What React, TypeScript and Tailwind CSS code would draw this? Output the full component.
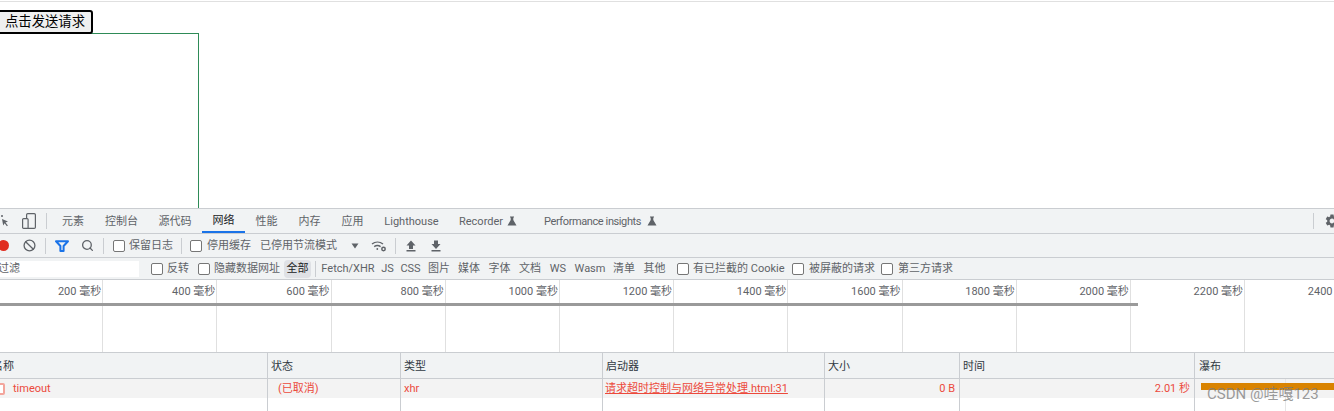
import React from 'react';
import { Ban, Search } from 'lucide-react';

const tabs = [
  { label: '元素', cls: 'w-[44px]' },
  { label: '控制台', cls: 'w-[53px]' },
  { label: '源代码', cls: 'w-[54px]' },
  { label: '网络', cls: 'w-[43px] border-b-2 border-[#1a73e8] text-[#202124]' },
  { label: '性能', cls: 'w-[43px]' },
  { label: '内存', cls: 'w-[43px]' },
  { label: '应用', cls: 'w-[43px]' },
  { label: 'Lighthouse', cls: 'w-[75px]' },
];

const chips = [
  { label: 'Fetch/XHR', cls: 'w-[60px]' },
  { label: 'JS', cls: 'w-[19px]' },
  { label: 'CSS', cls: 'w-[27px]' },
  { label: '图片', cls: 'w-[30px]' },
  { label: '媒体', cls: 'w-[30px]' },
  { label: '字体', cls: 'w-[31px]' },
  { label: '文档', cls: 'w-[30px]' },
  { label: 'WS', cls: 'w-[26px]' },
  { label: 'Wasm', cls: 'w-[38px]' },
  { label: '清单', cls: 'w-[30px]' },
  { label: '其他', cls: 'w-[31px]' },
];

const ticks = ['200', '400', '600', '800', '1000', '1200', '1400', '1600', '1800', '2000', '2200', '2400'];

const Check = ({ cls = '' }: { cls?: string }) => (
  <span className={`block h-[12px] w-[12px] shrink-0 rounded-[2px] border border-[#767676] bg-white ${cls}`} />
);

const Sep = ({ cls = '' }: { cls?: string }) => <span className={`block h-[16px] w-px shrink-0 bg-[#cacdd1] ${cls}`} />;

const Flask = ({ cls = '' }: { cls?: string }) => (
  <svg viewBox="0 0 10 10" className={`h-[10px] w-[10px] shrink-0 ${cls}`} fill="#5f6368">
    <path d="M3 0.5h4v1h-0.7v2.6L9.5 9.5H0.5L3.7 4.1V1.5H3z" />
  </svg>
);

const Row = ({ cells, cls }: { cells: React.ReactNode[]; cls: string }) => {
  const widths = ['w-[280px]', 'w-[133px]', 'w-[202px]', 'w-[222px]', 'w-[135px]', 'w-[235px]', 'w-[160px]'];
  return (
    <div className={`flex -ml-[12px] ${cls}`}>
      {cells.map((c, i) => (
        <div key={i} className={`flex h-full shrink-0 items-center border-r border-[#cacdd1] ${widths[i]}`}>
          {c}
        </div>
      ))}
    </div>
  );
};

export default function App() {
  return (
    <div className="relative h-[411px] w-[1334px] overflow-hidden bg-white font-['Roboto','Noto_Sans_CJK_SC',sans-serif] text-[11px] leading-[16px]">
      {/* page */}
      <div className="h-[208px] overflow-hidden pt-px">
        <div className="h-px bg-[#e0e0e0]" />
        <button className="relative z-10 -ml-[3px] mt-[8px] block h-[24px] rounded-[3px] border-2 border-black bg-[#efefef] px-[6px] text-[13.33px] leading-[18px] text-black">
          点击发送请求
        </button>
        <div className="-ml-[10px] -mt-px h-[300px] w-[209px] border border-[#2e8b57]" />
      </div>

      {/* devtools */}
      <div className="border-t border-[#cacdd1] bg-[#f1f3f4] text-[#5f6368]">
        <div className="flex h-[25px] items-center border-b border-[#cacdd1]">
          <svg viewBox="0 0 16 16" className="-ml-[6px] h-[16px] w-[16px] shrink-0" fill="none" stroke="#5f6368" strokeWidth="1.3">
            <path d="M9 3H3v8h3" strokeDasharray="2 1" />
            <path d="M8 6l6 2.4-2.5 1 2.4 3-1 .8-2.3-3-1.4 2.2z" fill="#5f6368" stroke="none" />
          </svg>
          <svg viewBox="0 0 14 16" className="ml-[12px] h-[16px] w-[14px] shrink-0" fill="none" stroke="#5f6368" strokeWidth="1.2">
            <rect x="4.6" y="0.6" width="8.8" height="14.8" rx="1.2" />
            <rect x="0.6" y="5.6" width="5.5" height="9.8" rx="1" fill="#f1f3f4" />
          </svg>
          <Sep cls="ml-[10px]" />
          <div className="ml-[4px] flex h-full">
            {tabs.map(t => (
              <div key={t.label} className={`flex h-full items-center justify-center pt-[2px] ${t.cls}`}>
                {t.label}
              </div>
            ))}
          </div>
          <span className="ml-[10px] pt-[2px]">Recorder</span>
          <Flask cls="ml-[4px]" />
          <span className="ml-[27px] pt-[2px] tracking-[-0.4px] whitespace-nowrap">Performance insights</span>
          <Flask cls="ml-[6px]" />
          <Sep cls="ml-auto" />
          <svg viewBox="0 0 24 24" className="ml-[10px] -mr-[6px] h-[16px] w-[16px] shrink-0" fill="#5f6368">
            <path d="M19.14 12.94c.04-.3.06-.61.06-.94 0-.32-.02-.64-.07-.94l2.03-1.58c.18-.14.23-.41.12-.61l-1.92-3.32c-.12-.22-.37-.29-.59-.22l-2.39.96c-.5-.38-1.03-.7-1.62-.94l-.36-2.54c-.04-.24-.24-.41-.48-.41h-3.84c-.24 0-.43.17-.47.41l-.36 2.54c-.59.24-1.13.57-1.62.94l-2.39-.96c-.22-.08-.47 0-.59.22L2.74 8.87c-.12.21-.08.47.12.61l2.03 1.58c-.05.3-.09.63-.09.94s.02.64.07.94l-2.03 1.58c-.18.14-.23.41-.12.61l1.92 3.32c.12.22.37.29.59.22l2.39-.96c.5.38 1.03.7 1.62.94l.36 2.54c.05.24.24.41.48.41h3.84c.24 0 .44-.17.47-.41l.36-2.54c.59-.24 1.13-.56 1.62-.94l2.39.96c.22.08.47 0 .59-.22l1.92-3.32c.12-.22.07-.47-.12-.61l-2.01-1.58zM12 15.6c-1.98 0-3.6-1.62-3.6-3.6s1.62-3.6 3.6-3.6 3.6 1.62 3.6 3.6-1.62 3.6-3.6 3.6z" />
          </svg>
        </div>

        <div className="flex h-[24px] items-center border-b border-[#cacdd1]">
          <span className="-ml-[2px] block h-[11px] w-[11px] shrink-0 rounded-full bg-[#e02d20]" />
          <Ban size={13} strokeWidth={2.4} className="ml-[14px] shrink-0" color="#5f6368" />
          <Sep cls="ml-[9px]" />
          <svg viewBox="0 0 14 12" className="ml-[9px] h-[12px] w-[14px] shrink-0" fill="none" stroke="#1a73e8" strokeWidth="2">
            <path d="M1 1.2h12L8.600 6v5H5.400V6z" strokeLinejoin="round" />
          </svg>
          <Search size={13} strokeWidth={2.4} className="ml-[12px] shrink-0" color="#5f6368" />
          <Sep cls="ml-[9px]" />
          <Check cls="ml-[9px]" />
          <span className="ml-[4px] w-[44px] shrink-0">保留日志</span>
          <Sep cls="ml-[8px]" />
          <Check cls="ml-[8px]" />
          <span className="ml-[5px] w-[44px] shrink-0">停用缓存</span>
          <span className="ml-[9px] w-[76px] shrink-0 whitespace-nowrap">已停用节流模式</span>
          <svg viewBox="0 0 8 6" className="ml-[15px] h-[6px] w-[8px] shrink-0" fill="#5f6368">
            <path d="M0.5 0.5h7L4 5.5z" />
          </svg>
          <svg viewBox="0 0 16 12" className="ml-[12px] h-[12px] w-[16px] shrink-0" fill="none" stroke="#5f6368" strokeWidth="1.4">
            <path d="M1 4a9 9 0 0 1 11 0M3.200 6.600a5.500 5.500 0 0 1 6.400 0" />
            <circle cx="6.300" cy="9" r="0.9" fill="#5f6368" stroke="none" />
            <circle cx="12.500" cy="9" r="1.700" strokeWidth="1.500" />
          </svg>
          <Sep cls="ml-[8px]" />
          <svg viewBox="0 0 10 12" className="ml-[10px] h-[12px] w-[10px] shrink-0" fill="#5f6368">
            <path d="M5 0.500L9.500 5.500H7v3.500H3V5.500H0.500zM0.500 10h9v1.500h-9z" />
          </svg>
          <svg viewBox="0 0 10 12" className="ml-[15px] h-[12px] w-[10px] shrink-0" fill="#5f6368">
            <path d="M3 0.500h4V4h2.500L5 9 0.500 4H3zM0.500 10h9v1.500h-9z" />
          </svg>
        </div>

        <div className="flex h-[22px] items-center border-b border-[#cacdd1]">
          <div className="-ml-[2px] flex h-[16px] w-[141px] shrink-0 items-center bg-white">过滤</div>
          <Check cls="ml-[12px]" />
          <span className="ml-[4px] w-[22px] shrink-0">反转</span>
          <Check cls="ml-[9px]" />
          <span className="ml-[4px] w-[66px] shrink-0">隐藏数据网址</span>
          <span className="ml-[4px] flex h-[18px] w-[27px] shrink-0 items-center justify-center rounded-[4px] bg-[#dfe1e5] text-[#202124]">全部</span>
          <Sep cls="ml-[4px]" />
          <div className="ml-[2px] flex h-full">
            {chips.map(c => (
              <div key={c.label} className={`flex h-full shrink-0 items-center justify-center ${c.cls}`}>
                {c.label}
              </div>
            ))}
          </div>
          <Check cls="ml-[7px]" />
          <span className="ml-[4px] w-[99px] shrink-0 whitespace-nowrap">有已拦截的 Cookie</span>
          <Check />
          <span className="ml-[5px] w-[66px] shrink-0">被屏蔽的请求</span>
          <Check cls="ml-[6px]" />
          <span className="ml-[5px] w-[56px] shrink-0">第三方请求</span>
        </div>
      </div>

      {/* overview */}
      <div className="relative flex h-[72px] bg-white -ml-[11px] text-[#5f6368]">
        {ticks.map(t => (
          <div key={t} className="flex h-full w-[114.2px] shrink-0 justify-end border-r border-[#e0e0e0] pr-px pt-[4px]">
            <span className="whitespace-nowrap">{t} 毫秒</span>
          </div>
        ))}
        <div className="absolute left-0 top-[23px] h-[2.500px] w-[1149px] bg-[#9a9a9a]" />
      </div>

      {/* table */}
      <div className="absolute left-[1285px] top-[379px] h-[32px] w-px bg-[#e6e6e6]" />
      <div className="border-t-2 border-[#cacdd1] -mt-px text-[#303942]">
        <Row
          cls="h-[26px] border-b border-[#cacdd1] bg-[#f1f3f4]"
          cells={[
            <span className="ml-[4px] pt-[2px]">名称</span>,
            <span className="ml-[3px] pt-[2px]">状态</span>,
            <span className="ml-[3px] pt-[2px]">类型</span>,
            <span className="ml-[3px] pt-[2px]">启动器</span>,
            <span className="ml-[3px] pt-[2px]">大小</span>,
            <span className="ml-[3px] pt-[2px]">时间</span>,
            <span className="ml-[4px] pt-[2px]">瀑布</span>,
          ]}
        />
        <Row
          cls="h-[19px] bg-[#f3f3f3] text-[#ec4a3c]"
          cells={[
            <>
              <span className="ml-[5px] block h-[12px] w-[12px] rounded-[2px] border-2 border-[#f3a59c] bg-white" />
              <span className="ml-[8px]">timeout</span>
            </>,
            <span className="ml-[10px]">(已取消)</span>,
            <span className="ml-[3px]">xhr</span>,
            <span className="ml-[2px] underline whitespace-nowrap">请求超时控制与网络异常处理.html:31</span>,
            <span className="ml-auto mr-[4px]">0 B</span>,
            <span className="ml-auto mr-[4px]">2.01 秒</span>,
            <span className="ml-[6px] block h-[7px] w-full -translate-y-[2px] bg-[#d98300]" />,
          ]}
        />
        <Row cls="h-[30px] bg-white" cells={[null, null, null, null, null, null, null]} />
      </div>

      {/* watermark */}
      <span className="absolute left-[1207px] top-[385px] text-[15px] leading-[18px] whitespace-nowrap text-[#7a7a7a]/75">
        CSDN @哇嘎123
      </span>
    </div>
  );
}
